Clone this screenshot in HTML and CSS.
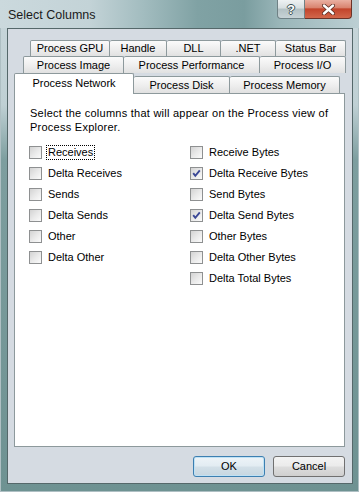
FILE: index.html
```html
<!DOCTYPE html>
<html lang="en">
<head>
    <meta charset="UTF-8">
    <title>Select Columns</title>
    <link rel="stylesheet" href="styles.css">
</head>
<body>
    <div class="window">
        <div class="titlebar">
            <span class="title">Select Columns</span>
            <div class="caption-buttons">
                <div class="cap-btn help">?</div>
                <div class="cap-btn close">
                    <svg width="13" height="11" viewBox="0 0 13 11">
                        <path d="M2 1.5 L11 9.5 M11 1.5 L2 9.5" stroke="#5a2a20" stroke-width="4" stroke-linecap="round"/>
                        <path d="M2 1.5 L11 9.5 M11 1.5 L2 9.5" stroke="#ffffff" stroke-width="2.4" stroke-linecap="round"/>
                    </svg>
                </div>
            </div>
        </div>

        <div class="frame-body">
            <div class="client">
                <div class="tabs">
                    <div class="tab-row row-1">
                        <div class="tab">Process GPU</div>
                        <div class="tab">Handle</div>
                        <div class="tab">DLL</div>
                        <div class="tab">.NET</div>
                        <div class="tab">Status Bar</div>
                    </div>
                    <div class="tab-row row-2">
                        <div class="tab">Process Image</div>
                        <div class="tab">Process Performance</div>
                        <div class="tab">Process I/O</div>
                    </div>
                    <div class="tab-row row-3">
                        <div class="tab selected">Process Network</div>
                        <div class="tab">Process Disk</div>
                        <div class="tab">Process Memory</div>
                    </div>
                </div>

                <div class="panel">
                    <p class="intro">Select the columns that will appear on the Process view of Process Explorer.</p>
                    <div class="columns">
                        <div class="col">
                            <div class="check-item"><span class="box"></span><span class="label focused">Receives</span></div>
                            <div class="check-item"><span class="box"></span><span class="label">Delta Receives</span></div>
                            <div class="check-item"><span class="box"></span><span class="label">Sends</span></div>
                            <div class="check-item"><span class="box"></span><span class="label">Delta Sends</span></div>
                            <div class="check-item"><span class="box"></span><span class="label">Other</span></div>
                            <div class="check-item"><span class="box"></span><span class="label">Delta Other</span></div>
                        </div>
                        <div class="col">
                            <div class="check-item"><span class="box"></span><span class="label">Receive Bytes</span></div>
                            <div class="check-item"><span class="box checked"><svg width="11" height="11" viewBox="0 0 11 11"><path d="M2.2 5.2 L4.3 7.8 L8.8 2.4" fill="none" stroke="#3a4796" stroke-width="1.9"/></svg></span><span class="label">Delta Receive Bytes</span></div>
                            <div class="check-item"><span class="box"></span><span class="label">Send Bytes</span></div>
                            <div class="check-item"><span class="box checked"><svg width="11" height="11" viewBox="0 0 11 11"><path d="M2.2 5.2 L4.3 7.8 L8.8 2.4" fill="none" stroke="#3a4796" stroke-width="1.9"/></svg></span><span class="label">Delta Send Bytes</span></div>
                            <div class="check-item"><span class="box"></span><span class="label">Other Bytes</span></div>
                            <div class="check-item"><span class="box"></span><span class="label">Delta Other Bytes</span></div>
                            <div class="check-item"><span class="box"></span><span class="label">Delta Total Bytes</span></div>
                        </div>
                    </div>
                </div>

                <div class="buttons">
                    <div class="btn default">OK</div>
                    <div class="btn">Cancel</div>
                </div>
            </div>
        </div>
    </div>
</body>
</html>
```

FILE: styles.css
```css
* {
    margin: 0;
    padding: 0;
    box-sizing: border-box;
}

body {
    font-family: "Liberation Sans", Arial, sans-serif;
    font-size: 11px;
    color: #000;
    background: #fff;
}

/* Window frame */
.window {
    width: 359px;
    height: 492px;
    display: flex;
    flex-direction: column;
    background: linear-gradient(180deg, #c8d6da 0, #bfd0d4 105px, #7d9e9f 160px, #6e9292 100%);
    box-shadow: inset 0 0 0 1px #aebfc3;
}

.titlebar {
    height: 28px;
    display: flex;
    justify-content: space-between;
    align-items: flex-start;
    padding: 0 7px 0 8px;
    background: linear-gradient(90deg,
        #cbd9dd 0,
        #c3d3d7 25%,
        #a2bcbf 40%,
        #80a2a4 55%,
        #7a9d9f 68%,
        #9ab6b9 78%,
        #bccfd3 100%);
}

.title {
    font-size: 12.5px;
    line-height: 30px;
    color: #1b1b1b;
}

.caption-buttons {
    display: flex;
}

.cap-btn {
    height: 19px;
    display: flex;
    align-items: center;
    justify-content: center;
}

.cap-btn.help {
    width: 28px;
    border: 1px solid #6f8185;
    border-top: none;
    border-radius: 0 0 0 4px;
    background: linear-gradient(180deg, #eef2f3 0, #d6dee0 45%, #b3c1c4 50%, #c7d3d6 100%);
    color: #fff;
    font-weight: bold;
    font-size: 13px;
    text-shadow: 1px 0 0 #3b4f53, -1px 0 0 #3b4f53, 0 1px 0 #3b4f53, 0 -1px 0 #3b4f53;
}

.cap-btn.close {
    width: 47px;
    border: 1px solid #6b3328;
    border-top: none;
    border-left: none;
    border-radius: 0 0 4px 0;
    background: linear-gradient(180deg, #eab0a2 0, #d98470 42%, #c2442b 50%, #d2674b 100%);
}

.frame-body {
    flex: 1;
    padding: 0 7px 8px 7px;
    display: flex;
}

.client {
    flex: 1;
    display: flex;
    flex-direction: column;
    background: #d5dbe2;
    border: 1px solid #55686a;
    padding: 11px 6px 0 6px;
}

/* Tabs */
.tab-row {
    display: grid;
}

.row-1 {
    margin-left: 16px;
    height: 16px;
    grid-template-columns: 80px 57px 54px 55px 70px;
}

.row-2 {
    margin-left: 9px;
    height: 17px;
    grid-template-columns: 101px 136px 86px;
}

.row-3 {
    margin-left: 0;
    height: 21px;
    margin-bottom: -1px;
    grid-template-columns: 120px 96px 110px;
    align-items: start;
    position: relative;
    z-index: 1;
}

.tab {
    border: 1px solid #8d999c;
    border-bottom: none;
    border-left: none;
    border-radius: 2px 2px 0 0;
    background: linear-gradient(180deg, #fbfbfb 0, #ececec 60%, #e1e1e1 100%);
    text-align: center;
    line-height: 15px;
    white-space: nowrap;
    height: 100%;
}

.tab:first-child {
    border-left: 1px solid #8d999c;
}

.row-2 .tab {
    line-height: 16px;
}

.row-3 .tab {
    margin-top: 3px;
    height: 17px;
    line-height: 16px;
}

.row-3 .tab.selected {
    margin-top: 0;
    height: 21px;
    line-height: 19px;
    background: #fff;
    border-left: 1px solid #8d999c;
}

/* Page */
.panel {
    width: 331px;
    height: 354px;
    background: #fff;
    border: 1px solid #8d999c;
    padding: 12px 15px 0 15px;
}

.intro {
    line-height: 14px;
    width: 310px;
    letter-spacing: 0.25px;
}

.columns {
    display: grid;
    grid-template-columns: 161px 1fr;
    margin-top: 8px;
}

.check-item {
    height: 21px;
    display: flex;
    align-items: center;
    gap: 4px;
    margin-left: -1px;
}

.box {
    width: 13px;
    height: 13px;
    border: 1px solid #8e9091;
    background: linear-gradient(135deg, #d3d3d3 0, #e9e9e9 50%, #fbfbfb 100%);
    display: flex;
    align-items: center;
    justify-content: center;
}

.label {
    padding: 0 1px;
    line-height: 13px;
    border: 1px solid transparent;
}

.label.focused {
    border: 1px dotted #000;
}

/* Buttons */
.buttons {
    display: flex;
    justify-content: flex-end;
    gap: 8px;
    padding: 9px 1px 0 0;
}

.btn {
    width: 72px;
    height: 21px;
    border: 1px solid #707070;
    border-radius: 3px;
    background: linear-gradient(180deg, #f3f3f3 0, #ebebeb 48%, #dddddd 52%, #cfcfcf 100%);
    text-align: center;
    line-height: 19px;
}

.btn.default {
    border-color: #3c7fb1;
    background: linear-gradient(180deg, #eef4f8 0, #e2ecf2 48%, #d3e0e8 52%, #c6d6e0 100%);
    box-shadow: inset 0 0 0 1px #bfe1f4;
}
```
